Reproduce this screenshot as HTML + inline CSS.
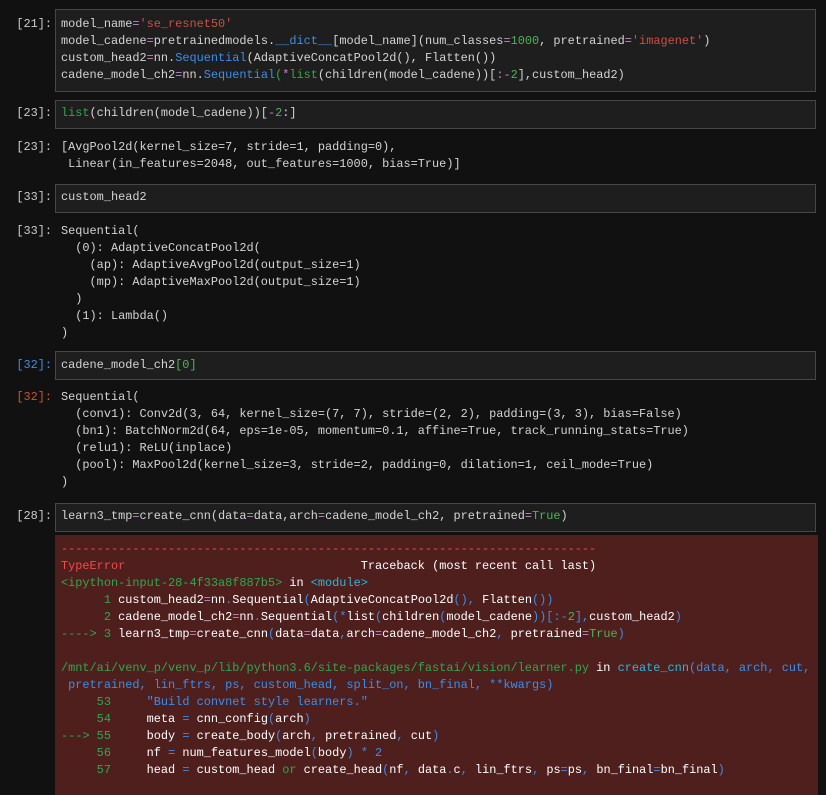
<!DOCTYPE html>
<html><head><meta charset="utf-8"><style>
body{margin:0;background:#111111;width:826px;height:788px;overflow:hidden;position:relative;font-family:"Liberation Mono","DejaVu Sans Mono",monospace;font-size:11.9px;color:#d4d4d4}
.p{position:absolute;width:52px;text-align:right;left:0;line-height:17px;color:#cccccc}
.pi{color:#3b8eea}.po{color:#d0532c}
.box{position:absolute;left:55px;width:761px;background:#1e1e1e;border:1px solid #474747;box-sizing:border-box}
.t{position:absolute;left:61px;line-height:17px;white-space:pre}
.err{position:absolute;left:55px;top:535px;width:763px;height:260px;background:#4e1f1d}
.e{color:#c586c0}.s{color:#ce4f3f}.b{color:#3b8eea}.g{color:#2fa84f}.n{color:#4fb35a}
.r{color:#f14c4c}.c{color:#29b8db}.w{color:#ffffff}
</style></head><body>
<div class="box" style="top:9px;height:83px"></div>
<div class="p" style="top:16px">[21]:</div>
<div class="t" style="top:16px">model_name<span class="e">=</span><span class="s">'se_resnet50'</span>
model_cadene<span class="e">=</span>pretrainedmodels.<span class="b">__dict__</span>[model_name](num_classes<span class="e">=</span><span class="n">1000</span>, pretrained<span class="e">=</span><span class="s">'imagenet'</span>)
custom_head2<span class="e">=</span>nn.<span class="b">Sequential</span>(AdaptiveConcatPool2d(), Flatten())
cadene_model_ch2<span class="e">=</span>nn.<span class="b">Sequential</span><span class="g">(</span><span class="e">*</span><span class="g">list</span>(children(model_cadene))[<span class="e">:-</span><span class="n">2</span>],custom_head2)</div>

<div class="box" style="top:100px;height:29px"></div>
<div class="p" style="top:105px">[23]:</div>
<div class="t" style="top:105px"><span class="g">list</span>(children(model_cadene))[<span class="e">-</span><span class="n">2</span>:]</div>
<div class="p" style="top:139px">[23]:</div>
<div class="t" style="top:139px">[AvgPool2d(kernel_size=7, stride=1, padding=0),
 Linear(in_features=2048, out_features=1000, bias=True)]</div>

<div class="box" style="top:184px;height:29px"></div>
<div class="p" style="top:189px">[33]:</div>
<div class="t" style="top:189px">custom_head2</div>
<div class="p" style="top:223px">[33]:</div>
<div class="t" style="top:223px">Sequential(
  (0): AdaptiveConcatPool2d(
    (ap): AdaptiveAvgPool2d(output_size=1)
    (mp): AdaptiveMaxPool2d(output_size=1)
  )
  (1): Lambda()
)</div>

<div class="box" style="top:351px;height:29px"></div>
<div class="p pi" style="top:357px">[32]:</div>
<div class="t" style="top:357px">cadene_model_ch2<span class="n">[0]</span></div>
<div class="p po" style="top:389px">[32]:</div>
<div class="t" style="top:389px">Sequential(
  (conv1): Conv2d(3, 64, kernel_size=(7, 7), stride=(2, 2), padding=(3, 3), bias=False)
  (bn1): BatchNorm2d(64, eps=1e-05, momentum=0.1, affine=True, track_running_stats=True)
  (relu1): ReLU(inplace)
  (pool): MaxPool2d(kernel_size=3, stride=2, padding=0, dilation=1, ceil_mode=True)
)</div>

<div class="box" style="top:503px;height:29px"></div>
<div class="p" style="top:508px">[28]:</div>
<div class="t" style="top:508px">learn3_tmp<span class="e">=</span>create_cnn(data<span class="e">=</span>data,arch<span class="e">=</span>cadene_model_ch2, pretrained<span class="e">=</span><span class="n">True</span>)</div>

<div class="err"></div>
<div class="t" style="top:541px"><span class="r">---------------------------------------------------------------------------</span>
<span class="r">TypeError</span>                                 <span class="w">Traceback (most recent call last)</span>
<span class="g">&lt;ipython-input-28-4f33a8f887b5&gt;</span> <span class="w">in</span> <span class="c">&lt;module&gt;</span>
<span class="g">      1</span> <span class="w">custom_head2</span><span class="e">=</span><span class="w">nn</span><span class="b">.</span><span class="w">Sequential</span><span class="b">(</span><span class="w">AdaptiveConcatPool2d</span><span class="b">(),</span> <span class="w">Flatten</span><span class="b">())</span>
<span class="g">      2</span> <span class="w">cadene_model_ch2</span><span class="e">=</span><span class="w">nn</span><span class="b">.</span><span class="w">Sequential</span><span class="b">(*</span><span class="w">list</span><span class="b">(</span><span class="w">children</span><span class="b">(</span><span class="w">model_cadene</span><span class="b">))[:-</span><span class="n">2</span><span class="b">],</span><span class="w">custom_head2</span><span class="b">)</span>
<span class="g">----&gt; 3</span> <span class="w">learn3_tmp</span><span class="e">=</span><span class="w">create_cnn</span><span class="b">(</span><span class="w">data</span><span class="e">=</span><span class="w">data</span><span class="b">,</span><span class="w">arch</span><span class="e">=</span><span class="w">cadene_model_ch2</span><span class="b">,</span> <span class="w">pretrained</span><span class="e">=</span><span class="n">True</span><span class="b">)</span>

<span class="g">/mnt/ai/venv_p/venv_p/lib/python3.6/site-packages/fastai/vision/learner.py</span> <span class="w">in</span> <span class="c">create_cnn</span><span class="b">(data, arch, cut,</span>
<span class="b"> pretrained, lin_ftrs, ps, custom_head, split_on, bn_final, **kwargs)</span>
<span class="g">     53</span> <span class="b">    "Build convnet style learners."</span>
<span class="g">     54</span> <span class="w">    meta </span><span class="b">=</span><span class="w"> cnn_config</span><span class="b">(</span><span class="w">arch</span><span class="b">)</span>
<span class="g">---&gt; 55</span> <span class="w">    body </span><span class="b">=</span><span class="w"> create_body</span><span class="b">(</span><span class="w">arch</span><span class="b">,</span><span class="w"> pretrained</span><span class="b">,</span><span class="w"> cut</span><span class="b">)</span>
<span class="g">     56</span> <span class="w">    nf </span><span class="b">=</span><span class="w"> num_features_model</span><span class="b">(</span><span class="w">body</span><span class="b">)</span> <span class="b">*</span> <span class="b">2</span>
<span class="g">     57</span> <span class="w">    head </span><span class="b">=</span><span class="w"> custom_head </span><span class="g">or</span><span class="w"> create_head</span><span class="b">(</span><span class="w">nf</span><span class="b">,</span><span class="w"> data</span><span class="b">.</span><span class="w">c</span><span class="b">,</span><span class="w"> lin_ftrs</span><span class="b">,</span><span class="w"> ps</span><span class="b">=</span><span class="w">ps</span><span class="b">,</span><span class="w"> bn_final</span><span class="b">=</span><span class="w">bn_final</span><span class="b">)</span></div>
</body></html>
